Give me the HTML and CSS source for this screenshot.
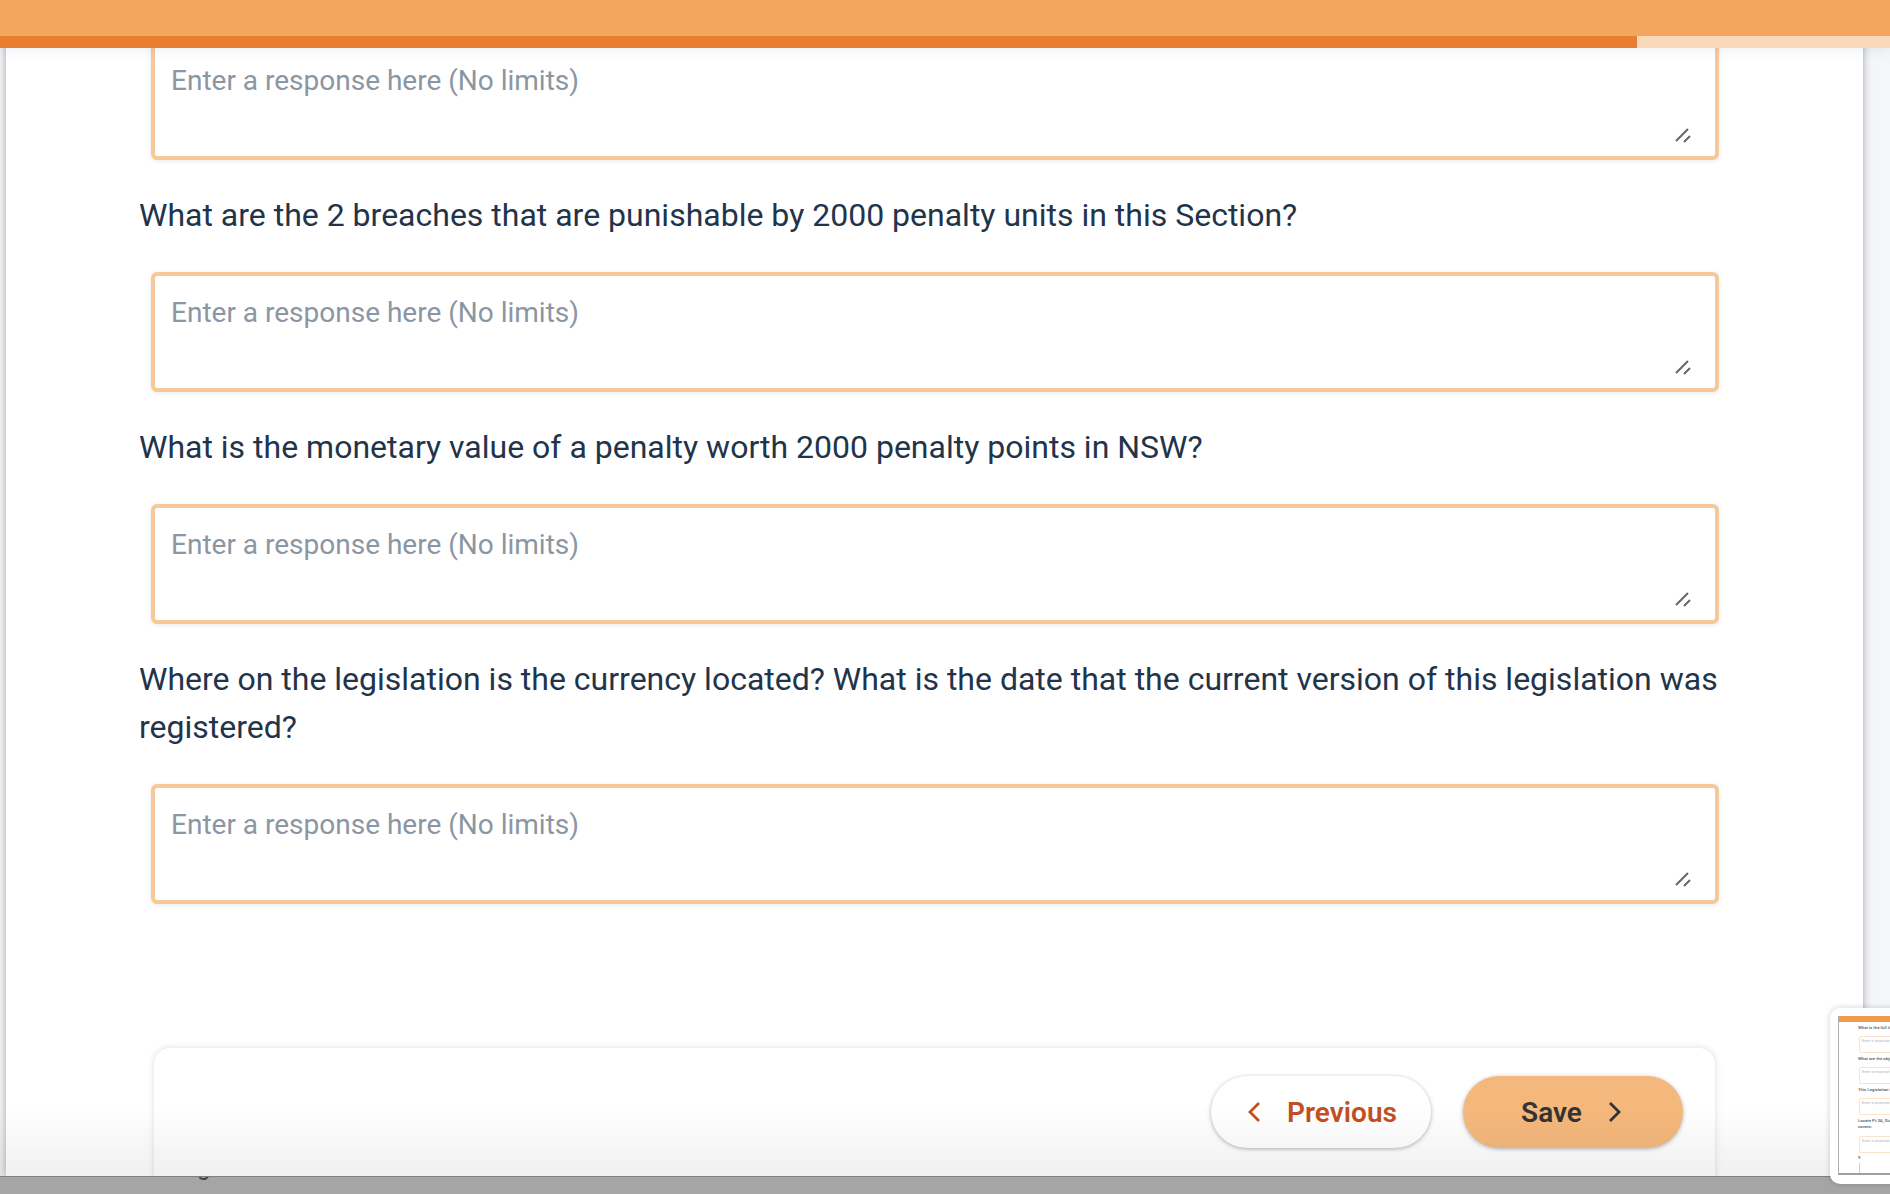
FILE: index.html
```html
<!DOCTYPE html>
<html>
<head>
    <meta charset="UTF-8">
    <title>Questions</title>
    <link rel="stylesheet" href="styles.css">
</head>
<body>

<div class="top-bar">
    <div class="top-fill"></div>
    <div class="progress">
        <div class="progress-done"></div>
    </div>
</div>

<div class="desk">
    <div class="page">
        <div class="answer-box">
            <textarea class="answer" placeholder="Enter a response here (No limits)"></textarea>
            <svg class="grip" viewBox="0 0 16 16"><path d="M1 14 L13 2 M9 15 L15 9"/></svg>
        </div>

        <p class="question">What are the 2 breaches that are punishable by 2000 penalty units in this Section?</p>
        <div class="answer-box">
            <textarea class="answer" placeholder="Enter a response here (No limits)"></textarea>
            <svg class="grip" viewBox="0 0 16 16"><path d="M1 14 L13 2 M9 15 L15 9"/></svg>
        </div>

        <p class="question">What is the monetary value of a penalty worth 2000 penalty points in NSW?</p>
        <div class="answer-box">
            <textarea class="answer" placeholder="Enter a response here (No limits)"></textarea>
            <svg class="grip" viewBox="0 0 16 16"><path d="M1 14 L13 2 M9 15 L15 9"/></svg>
        </div>

        <p class="question">Where on the legislation is the currency located? What is the date that the current version of this legislation was registered?</p>
        <div class="answer-box">
            <textarea class="answer" placeholder="Enter a response here (No limits)"></textarea>
            <svg class="grip" viewBox="0 0 16 16"><path d="M1 14 L13 2 M9 15 L15 9"/></svg>
        </div>

        <div class="nav-card">
            <button class="nav-btn btn-prev">
                <svg class="chev" viewBox="0 0 12 20"><path d="M11 1 L2 10 L11 19"/></svg>
                <span>Previous</span>
            </button>
            <button class="nav-btn btn-save">
                <span>Save</span>
                <svg class="chev" viewBox="0 0 12 20"><path d="M1 1 L10 10 L1 19"/></svg>
            </button>
        </div>
    </div>
    <div class="fade"></div>
</div>

<div class="status-bar">
    <div class="status-cell"><span class="status-text">g</span></div>
</div>

<div class="thumb">
    <div class="thumb-page">
        <div class="thumb-top"></div>
        <div class="thumb-body">
            <div class="t-q">What is the full title of this legislation</div>
            <div class="t-a">Enter a response here</div>
            <div class="t-q">What are the objects of this legislation</div>
            <div class="t-a">Enter a response here</div>
            <div class="t-q">This Legislation is administered by</div>
            <div class="t-a">Enter a response here</div>
            <div class="t-q">Locate Pt 3A, Div 2 of the legislation and</div>
            <div class="t-q">covers:</div>
            <div class="t-a">Enter a response here</div>
            <div class="t-q">9</div>
            <div class="t-stub"></div>
        </div>
    </div>
</div>

</body>
</html>
```

FILE: styles.css
```css
html, body {
    margin: 0;
    padding: 0;
    height: 100%;
    overflow: hidden;
    background: #f5f6f8;
    font-family: Roboto, sans-serif;
}

body {
    display: flex;
    flex-direction: column;
}

.top-bar {
    position: relative;
    z-index: 2;
    flex: none;
    box-shadow: 0 3px 10px rgba(60, 80, 110, 0.08);
}

.top-fill {
    height: 36px;
    background: #f3a65d;
}

.progress {
    height: 12px;
    background: #f9d9b9;
}

.progress-done {
    width: 1637px;
    height: 100%;
    background: #e87e2f;
}

.desk {
    position: relative;
    flex: 1;
    min-height: 0;
    overflow: hidden;
}

.page {
    width: 1857px;
    height: calc(100% + 8px);
    box-sizing: border-box;
    margin: -8px 0 0 6px;
    padding-left: 133px;
    overflow: hidden;
    background: #fff;
    box-shadow: 0 0 8px rgba(70, 85, 100, 0.5);
}

.answer-box {
    position: relative;
    width: 1568px;
    height: 120px;
    margin-left: 12px;
}

.answer {
    display: block;
    box-sizing: border-box;
    width: 100%;
    height: 100%;
    margin: 0;
    padding: 19px 16px;
    border: 4px solid #f6c89a;
    border-radius: 6px;
    outline: none;
    resize: none;
    background: #fff;
    box-shadow: 0 1px 4px rgba(60, 70, 90, 0.12);
    font-family: Roboto, sans-serif;
    font-size: 28px;
    line-height: 36px;
    color: #22344a;
}

.answer::placeholder {
    color: #8a96a3;
    opacity: 1;
}

.grip {
    position: absolute;
    right: 28px;
    bottom: 17px;
    width: 16px;
    height: 16px;
    fill: none;
    stroke: #666666;
    stroke-width: 2;
}

.question {
    width: 1590px;
    margin: 31px 0 33px;
    font-size: 32px;
    line-height: 48px;
    color: #22344a;
}

.nav-card {
    display: flex;
    justify-content: flex-end;
    gap: 32px;
    box-sizing: border-box;
    width: 1561px;
    height: 170px;
    margin: 144px 0 0 15px;
    padding: 28px 32px 0 0;
    background: #fff;
    border-radius: 16px 16px 0 0;
    box-shadow: 0 0 6px rgba(70, 85, 100, 0.22);
}

.nav-btn {
    display: flex;
    align-items: center;
    justify-content: center;
    gap: 27px;
    width: 220px;
    height: 72px;
    padding: 0;
    border: 0;
    border-radius: 36px;
    font-family: Roboto, sans-serif;
    font-size: 28px;
    font-weight: 600;
    box-shadow: 0 1px 4px rgba(60, 60, 80, 0.4);
}

.btn-prev {
    padding-left: 3px;
    background: #fff;
    color: #c24f1f;
}

.btn-save {
    padding-right: 4px;
    background: #f5b87c;
    color: #333333;
}

.chev {
    width: 12px;
    height: 20px;
    fill: none;
    stroke: currentColor;
    stroke-width: 2.8;
}

/* page darkens a little above the status bar */
.fade {
    position: absolute;
    left: 0;
    right: 0;
    bottom: 0;
    height: 70px;
    background: linear-gradient(rgba(0, 0, 0, 0), rgba(0, 0, 0, 0.06));
    pointer-events: none;
}

.status-bar {
    position: relative;
    z-index: 2;
    flex: none;
    height: 17px;
    overflow: hidden;
    background: #a5a5a5;
    border-top: 1px solid #808080;
}

.status-cell {
    width: 348px;
    height: 100%;
    border-right: 2px solid #868686;
}

.status-text {
    display: block;
    margin: -24px 0 0 197px;
    font-size: 24px;
    line-height: 28px;
    color: #444444;
}

.thumb {
    position: absolute;
    z-index: 3;
    top: 1008px;
    left: 1830px;
    width: 120px;
    height: 176px;
    box-sizing: border-box;
    padding: 8px;
    background: #fff;
    border-radius: 10px;
    box-shadow: 0 0 6px rgba(0, 0, 0, 0.18);
}

.thumb-page {
    height: 157px;
    overflow: hidden;
    background: #fff;
    border-left: 1px solid #b0b0b0;
    border-bottom: 2px solid #a0a0a0;
}

.thumb-top {
    height: 6px;
    background: #f09a4c;
}

.thumb-body {
    padding: 2.8px 0 0 19px;
    white-space: nowrap;
}

.t-q {
    font-size: 4.3px;
    line-height: 6.4px;
    font-weight: 500;
    color: #4a5868;
}

.t-a {
    box-sizing: border-box;
    width: 90px;
    height: 17px;
    margin: 5px 0 2.6px 1px;
    padding: 2px 2px;
    border: 1.5px solid #fbe3cc;
    border-radius: 2px;
    font-size: 3.7px;
    line-height: 5px;
    color: #b0b6be;
}

.t-stub {
    width: 1px;
    height: 12px;
    margin: 1px 0 0 1px;
    background: #f6c89a;
}
```
